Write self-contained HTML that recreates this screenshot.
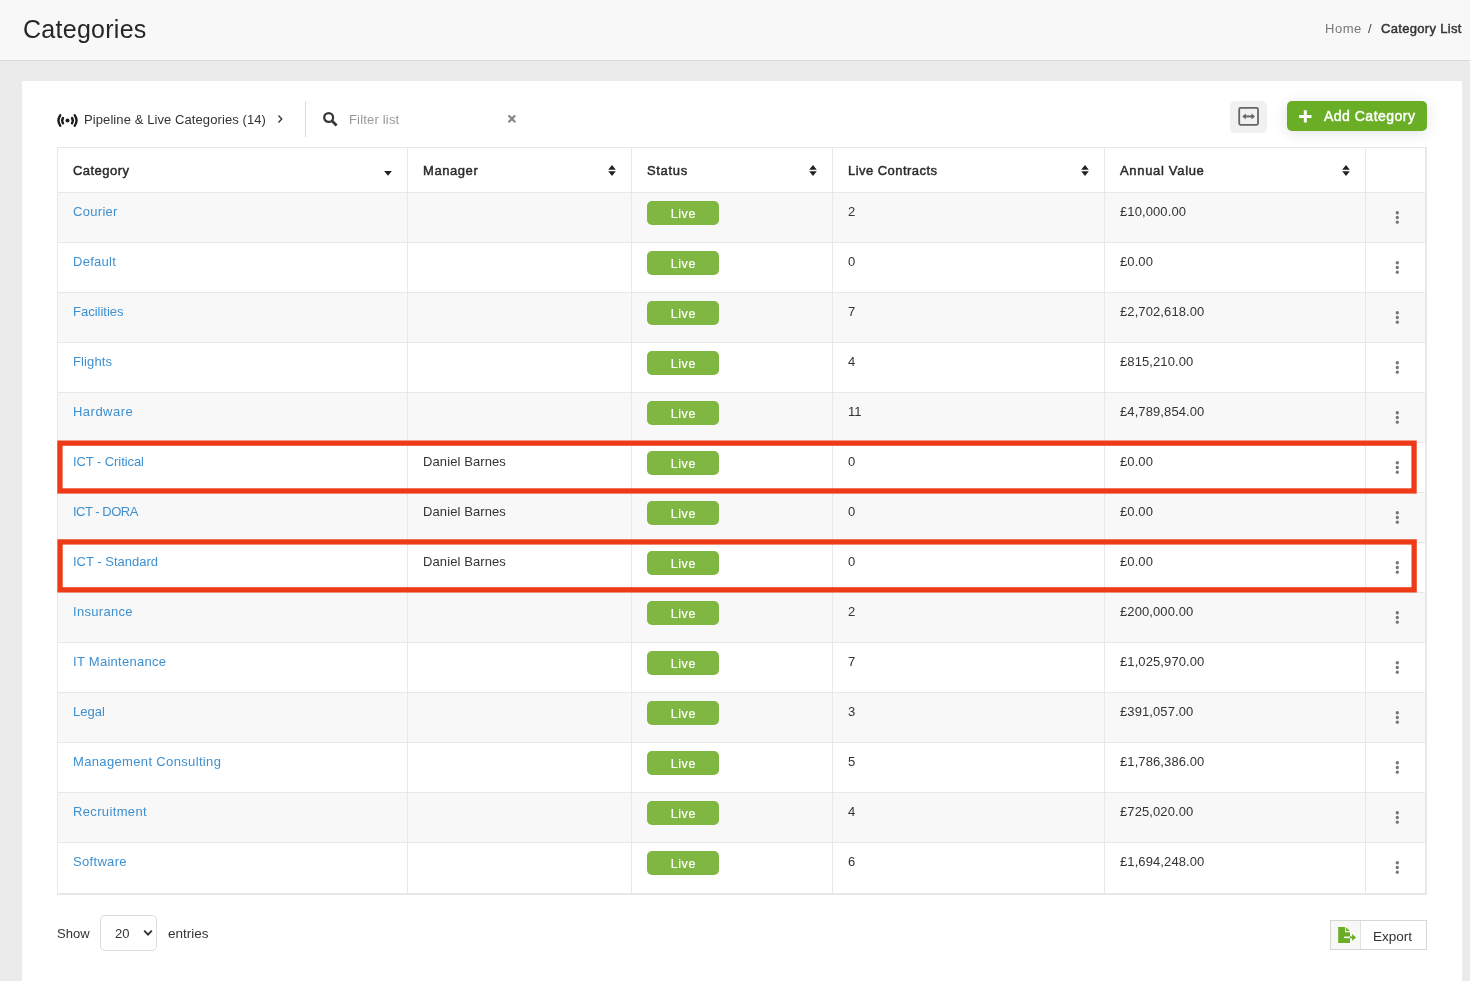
<!DOCTYPE html>
<html><head><meta charset="utf-8"><title>Categories</title>
<style>
html,body{margin:0;padding:0;}
body{width:1470px;height:981px;overflow:hidden;background:#ebebeb;position:relative;
 font-family:"Liberation Sans",sans-serif;color:#333;}
.abs{position:absolute;display:block;}
.t,.badge{will-change:transform;}
.t{position:absolute;white-space:nowrap;line-height:16px;font-size:13px;}
#hdr{position:absolute;left:0;top:0;width:1470px;height:60px;background:#f8f8f8;border-bottom:1px solid #d9d9d9;}
#card{position:absolute;left:22px;top:81px;width:1440px;height:900px;background:#fff;}
.vl{position:absolute;width:1px;background:#e8e8e8;}
.hl{position:absolute;height:1px;background:#e8e8e8;}
.row{position:absolute;left:57px;width:1369px;height:50px;}
.odd{background:#f8f8f8;}
.lnk{color:#3e90d0;}
.badge{position:absolute;width:72px;height:24px;border-radius:5px;background:#80b742;color:#fff;
 font-size:12.5px;line-height:26px;text-align:center;letter-spacing:0.6px;text-indent:0.6px;-webkit-text-stroke:0.2px #fff;}
.dot{position:absolute;width:3.4px;height:3.4px;border-radius:50%;background:#777;}
.sb{font-weight:normal;-webkit-text-stroke:0.45px currentColor;}
.th{color:#2a2a2a;}
.red{position:absolute;border:5px solid #ea3b16;box-sizing:border-box;}
</style></head><body>

<div id="hdr"></div>
<div class="t" style="left:22.5px;top:13.5px;font-size:25px;line-height:30px;color:#262626;letter-spacing:0.27px;">Categories</div>
<div class="t" style="left:1325px;top:21px;color:#777;letter-spacing:0.55px;">Home</div>
<div class="t" style="left:1367.5px;top:21px;color:#444;">/</div>
<div class="t sb" style="left:1380.8px;top:21px;color:#333;letter-spacing:0.32px;">Category List</div>
<div id="card"></div>
<svg class="abs" style="left:57px;top:113px" width="21" height="15" viewBox="0 0 21 15">
<g fill="none" stroke="#1e1e1e" stroke-width="2.4" stroke-linecap="round">
<path d="M3.2 2.3 Q-0.3 7.5 3.2 12.7"/><path d="M6 5 Q4.4 7.6 6 10.3"/>
<path d="M17.8 2.3 Q21.3 7.5 17.8 12.7"/><path d="M15 5 Q16.6 7.6 15 10.3"/>
</g><circle cx="10.5" cy="7.5" r="2" fill="#1e1e1e"/></svg>
<div class="t" style="left:83.5px;top:112px;color:#333;letter-spacing:0.09px;">Pipeline &amp; Live Categories (14)</div>
<svg class="abs" style="left:276px;top:114px" width="8" height="10" viewBox="0 0 8 10">
<path d="M2.5 1.5 L5.8 5 L2.5 8.5" fill="none" stroke="#333" stroke-width="1.3"/></svg>
<div class="vl" style="left:305px;top:101px;height:36px;background:#dcdcdc;"></div>
<svg class="abs" style="left:318px;top:108px" width="24" height="22" viewBox="0 0 24 22">
<circle cx="10.65" cy="9.5" r="4.45" fill="none" stroke="#363636" stroke-width="2.2"/>
<path d="M13.9 12.8 L18.6 17.5" stroke="#363636" stroke-width="2.7"/></svg>
<div class="t" style="left:349px;top:112px;color:#999;letter-spacing:0.18px;">Filter list</div>
<svg class="abs" style="left:502px;top:109px" width="20" height="20" viewBox="0 0 20 20">
<path d="M7.2 7.1 L12.6 12.6 M12.6 7.1 L7.2 12.6" stroke="#858585" stroke-width="2.2" stroke-linecap="round"/></svg>
<div class="abs" style="left:1230px;top:101px;width:37px;height:32px;border-radius:5px;background:#f1f1f1;"></div>
<svg class="abs" style="left:1232px;top:102px" width="32" height="30" viewBox="0 0 32 30">
<rect x="7.2" y="5.9" width="18.8" height="16.9" rx="1.5" fill="none" stroke="#666" stroke-width="1.8"/>
<path d="M11.6 14.4 H21.6" stroke="#666" stroke-width="2"/>
<path d="M10.6 14.4 L13.6 11.9 L13.6 16.9 Z M22.7 14.4 L19.7 11.9 L19.7 16.9 Z" fill="#666" stroke="#666" stroke-width="0.5" stroke-linejoin="round"/></svg>
<div class="abs" style="left:1287px;top:101px;width:140px;height:30px;border-radius:5px;background:#6aae25;box-shadow:0 2px 14px rgba(0,0,0,0.12);"></div>
<svg class="abs" style="left:1298px;top:109px" width="15" height="15" viewBox="0 0 15 15">
<path d="M7.3 1.2 V13.6 M1.1 7.4 H13.5" stroke="#fff" stroke-width="3"/></svg>
<div class="t sb" style="left:1323.5px;top:108px;color:#fff;font-size:14px;letter-spacing:0.49px;">Add Category</div>
<div class="row odd" style="top:192px;"></div>
<div class="row" style="top:242px;"></div>
<div class="row odd" style="top:292px;"></div>
<div class="row" style="top:342px;"></div>
<div class="row odd" style="top:392px;"></div>
<div class="row" style="top:442px;"></div>
<div class="row odd" style="top:492px;"></div>
<div class="row" style="top:542px;"></div>
<div class="row odd" style="top:592px;"></div>
<div class="row" style="top:642px;"></div>
<div class="row odd" style="top:692px;"></div>
<div class="row" style="top:742px;"></div>
<div class="row odd" style="top:792px;"></div>
<div class="row" style="top:842px;"></div>
<div class="hl" style="left:57px;top:147px;width:1370px;"></div>
<div class="hl" style="left:57px;top:192px;width:1370px;"></div>
<div class="hl" style="left:57px;top:242px;width:1370px;"></div>
<div class="hl" style="left:57px;top:292px;width:1370px;"></div>
<div class="hl" style="left:57px;top:342px;width:1370px;"></div>
<div class="hl" style="left:57px;top:392px;width:1370px;"></div>
<div class="hl" style="left:57px;top:442px;width:1370px;"></div>
<div class="hl" style="left:57px;top:492px;width:1370px;"></div>
<div class="hl" style="left:57px;top:542px;width:1370px;"></div>
<div class="hl" style="left:57px;top:592px;width:1370px;"></div>
<div class="hl" style="left:57px;top:642px;width:1370px;"></div>
<div class="hl" style="left:57px;top:692px;width:1370px;"></div>
<div class="hl" style="left:57px;top:742px;width:1370px;"></div>
<div class="hl" style="left:57px;top:792px;width:1370px;"></div>
<div class="hl" style="left:57px;top:842px;width:1370px;"></div>
<div class="hl" style="left:57px;top:893px;width:1370px;height:2px;"></div>
<div class="vl" style="left:57px;top:147px;height:746px;"></div>
<div class="vl" style="left:407px;top:147px;height:746px;"></div>
<div class="vl" style="left:631px;top:147px;height:746px;"></div>
<div class="vl" style="left:832px;top:147px;height:746px;"></div>
<div class="vl" style="left:1104px;top:147px;height:746px;"></div>
<div class="vl" style="left:1365px;top:147px;height:746px;"></div>
<div class="vl" style="left:1425px;top:147px;height:748px;width:2px;"></div>
<div class="t th sb" style="left:73px;top:163px;letter-spacing:0.46px;">Category</div>
<svg class="abs" style="left:384px;top:170px" width="8" height="6" viewBox="0 0 8 6"><path d="M0.1 1 L7.9 1 L4 5.8 Z" fill="#222"/></svg>
<div class="t th sb" style="left:423px;top:163px;letter-spacing:0.57px;">Manager</div>
<svg class="abs" style="left:608.4px;top:164px" width="8" height="13" viewBox="0 0 8 13"><path d="M0.2 5.8 L4 1 L7.8 5.8 Z M0.2 7.2 L7.8 7.2 L4 12 Z" fill="#222"/></svg>
<div class="t th sb" style="left:647px;top:163px;letter-spacing:0.66px;">Status</div>
<svg class="abs" style="left:809.4px;top:164px" width="8" height="13" viewBox="0 0 8 13"><path d="M0.2 5.8 L4 1 L7.8 5.8 Z M0.2 7.2 L7.8 7.2 L4 12 Z" fill="#222"/></svg>
<div class="t th sb" style="left:848px;top:163px;letter-spacing:0.45px;">Live Contracts</div>
<svg class="abs" style="left:1081.4px;top:164px" width="8" height="13" viewBox="0 0 8 13"><path d="M0.2 5.8 L4 1 L7.8 5.8 Z M0.2 7.2 L7.8 7.2 L4 12 Z" fill="#222"/></svg>
<div class="t th sb" style="left:1120px;top:163px;letter-spacing:0.68px;">Annual Value</div>
<svg class="abs" style="left:1342.4px;top:164px" width="8" height="13" viewBox="0 0 8 13"><path d="M0.2 5.8 L4 1 L7.8 5.8 Z M0.2 7.2 L7.8 7.2 L4 12 Z" fill="#222"/></svg>
<div class="t lnk" style="left:73px;top:204px;letter-spacing:0.300px;">Courier</div>
<div class="badge" style="left:647px;top:201px;">Live</div>
<div class="t" style="left:848px;top:204px;">2</div>
<div class="t" style="left:1120px;top:204px;letter-spacing:0.1px;">£10,000.00</div>
<svg class="abs" style="left:1390px;top:207px" width="15" height="20" viewBox="0 0 15 20"><circle cx="7.3" cy="5.7" r="1.7" fill="#777"/><circle cx="7.3" cy="10.5" r="1.65" fill="#777"/><circle cx="7.3" cy="15.2" r="1.65" fill="#777"/></svg>
<div class="t lnk" style="left:73px;top:254px;letter-spacing:0.283px;">Default</div>
<div class="badge" style="left:647px;top:251px;">Live</div>
<div class="t" style="left:848px;top:254px;">0</div>
<div class="t" style="left:1120px;top:254px;letter-spacing:0.1px;">£0.00</div>
<svg class="abs" style="left:1390px;top:257px" width="15" height="20" viewBox="0 0 15 20"><circle cx="7.3" cy="5.7" r="1.7" fill="#777"/><circle cx="7.3" cy="10.5" r="1.65" fill="#777"/><circle cx="7.3" cy="15.2" r="1.65" fill="#777"/></svg>
<div class="t lnk" style="left:73px;top:304px;letter-spacing:0.000px;">Facilities</div>
<div class="badge" style="left:647px;top:301px;">Live</div>
<div class="t" style="left:848px;top:304px;">7</div>
<div class="t" style="left:1120px;top:304px;letter-spacing:0.1px;">£2,702,618.00</div>
<svg class="abs" style="left:1390px;top:307px" width="15" height="20" viewBox="0 0 15 20"><circle cx="7.3" cy="5.7" r="1.7" fill="#777"/><circle cx="7.3" cy="10.5" r="1.65" fill="#777"/><circle cx="7.3" cy="15.2" r="1.65" fill="#777"/></svg>
<div class="t lnk" style="left:73px;top:354px;letter-spacing:0.133px;">Flights</div>
<div class="badge" style="left:647px;top:351px;">Live</div>
<div class="t" style="left:848px;top:354px;">4</div>
<div class="t" style="left:1120px;top:354px;letter-spacing:0.1px;">£815,210.00</div>
<svg class="abs" style="left:1390px;top:357px" width="15" height="20" viewBox="0 0 15 20"><circle cx="7.3" cy="5.7" r="1.7" fill="#777"/><circle cx="7.3" cy="10.5" r="1.65" fill="#777"/><circle cx="7.3" cy="15.2" r="1.65" fill="#777"/></svg>
<div class="t lnk" style="left:73px;top:404px;letter-spacing:0.486px;">Hardware</div>
<div class="badge" style="left:647px;top:401px;">Live</div>
<div class="t" style="left:848px;top:404px;">11</div>
<div class="t" style="left:1120px;top:404px;letter-spacing:0.1px;">£4,789,854.00</div>
<svg class="abs" style="left:1390px;top:407px" width="15" height="20" viewBox="0 0 15 20"><circle cx="7.3" cy="5.7" r="1.7" fill="#777"/><circle cx="7.3" cy="10.5" r="1.65" fill="#777"/><circle cx="7.3" cy="15.2" r="1.65" fill="#777"/></svg>
<div class="t lnk" style="left:73px;top:454px;letter-spacing:-0.077px;">ICT - Critical</div>
<div class="t" style="left:423px;top:454px;letter-spacing:0.1px;">Daniel Barnes</div>
<div class="badge" style="left:647px;top:451px;">Live</div>
<div class="t" style="left:848px;top:454px;">0</div>
<div class="t" style="left:1120px;top:454px;letter-spacing:0.1px;">£0.00</div>
<svg class="abs" style="left:1390px;top:457px" width="15" height="20" viewBox="0 0 15 20"><circle cx="7.3" cy="5.7" r="1.7" fill="#777"/><circle cx="7.3" cy="10.5" r="1.65" fill="#777"/><circle cx="7.3" cy="15.2" r="1.65" fill="#777"/></svg>
<div class="t lnk" style="left:73px;top:504px;letter-spacing:-0.489px;">ICT - DORA</div>
<div class="t" style="left:423px;top:504px;letter-spacing:0.1px;">Daniel Barnes</div>
<div class="badge" style="left:647px;top:501px;">Live</div>
<div class="t" style="left:848px;top:504px;">0</div>
<div class="t" style="left:1120px;top:504px;letter-spacing:0.1px;">£0.00</div>
<svg class="abs" style="left:1390px;top:507px" width="15" height="20" viewBox="0 0 15 20"><circle cx="7.3" cy="5.7" r="1.7" fill="#777"/><circle cx="7.3" cy="10.5" r="1.65" fill="#777"/><circle cx="7.3" cy="15.2" r="1.65" fill="#777"/></svg>
<div class="t lnk" style="left:73px;top:554px;letter-spacing:0.000px;">ICT - Standard</div>
<div class="t" style="left:423px;top:554px;letter-spacing:0.1px;">Daniel Barnes</div>
<div class="badge" style="left:647px;top:551px;">Live</div>
<div class="t" style="left:848px;top:554px;">0</div>
<div class="t" style="left:1120px;top:554px;letter-spacing:0.1px;">£0.00</div>
<svg class="abs" style="left:1390px;top:557px" width="15" height="20" viewBox="0 0 15 20"><circle cx="7.3" cy="5.7" r="1.7" fill="#777"/><circle cx="7.3" cy="10.5" r="1.65" fill="#777"/><circle cx="7.3" cy="15.2" r="1.65" fill="#777"/></svg>
<div class="t lnk" style="left:73px;top:604px;letter-spacing:0.300px;">Insurance</div>
<div class="badge" style="left:647px;top:601px;">Live</div>
<div class="t" style="left:848px;top:604px;">2</div>
<div class="t" style="left:1120px;top:604px;letter-spacing:0.1px;">£200,000.00</div>
<svg class="abs" style="left:1390px;top:607px" width="15" height="20" viewBox="0 0 15 20"><circle cx="7.3" cy="5.7" r="1.7" fill="#777"/><circle cx="7.3" cy="10.5" r="1.65" fill="#777"/><circle cx="7.3" cy="15.2" r="1.65" fill="#777"/></svg>
<div class="t lnk" style="left:73px;top:654px;letter-spacing:0.285px;">IT Maintenance</div>
<div class="badge" style="left:647px;top:651px;">Live</div>
<div class="t" style="left:848px;top:654px;">7</div>
<div class="t" style="left:1120px;top:654px;letter-spacing:0.1px;">£1,025,970.00</div>
<svg class="abs" style="left:1390px;top:657px" width="15" height="20" viewBox="0 0 15 20"><circle cx="7.3" cy="5.7" r="1.7" fill="#777"/><circle cx="7.3" cy="10.5" r="1.65" fill="#777"/><circle cx="7.3" cy="15.2" r="1.65" fill="#777"/></svg>
<div class="t lnk" style="left:73px;top:704px;letter-spacing:0.000px;">Legal</div>
<div class="badge" style="left:647px;top:701px;">Live</div>
<div class="t" style="left:848px;top:704px;">3</div>
<div class="t" style="left:1120px;top:704px;letter-spacing:0.1px;">£391,057.00</div>
<svg class="abs" style="left:1390px;top:707px" width="15" height="20" viewBox="0 0 15 20"><circle cx="7.3" cy="5.7" r="1.7" fill="#777"/><circle cx="7.3" cy="10.5" r="1.65" fill="#777"/><circle cx="7.3" cy="15.2" r="1.65" fill="#777"/></svg>
<div class="t lnk" style="left:73px;top:754px;letter-spacing:0.350px;">Management Consulting</div>
<div class="badge" style="left:647px;top:751px;">Live</div>
<div class="t" style="left:848px;top:754px;">5</div>
<div class="t" style="left:1120px;top:754px;letter-spacing:0.1px;">£1,786,386.00</div>
<svg class="abs" style="left:1390px;top:757px" width="15" height="20" viewBox="0 0 15 20"><circle cx="7.3" cy="5.7" r="1.7" fill="#777"/><circle cx="7.3" cy="10.5" r="1.65" fill="#777"/><circle cx="7.3" cy="15.2" r="1.65" fill="#777"/></svg>
<div class="t lnk" style="left:73px;top:804px;letter-spacing:0.350px;">Recruitment</div>
<div class="badge" style="left:647px;top:801px;">Live</div>
<div class="t" style="left:848px;top:804px;">4</div>
<div class="t" style="left:1120px;top:804px;letter-spacing:0.1px;">£725,020.00</div>
<svg class="abs" style="left:1390px;top:807px" width="15" height="20" viewBox="0 0 15 20"><circle cx="7.3" cy="5.7" r="1.7" fill="#777"/><circle cx="7.3" cy="10.5" r="1.65" fill="#777"/><circle cx="7.3" cy="15.2" r="1.65" fill="#777"/></svg>
<div class="t lnk" style="left:73px;top:854px;letter-spacing:0.314px;">Software</div>
<div class="badge" style="left:647px;top:851px;">Live</div>
<div class="t" style="left:848px;top:854px;">6</div>
<div class="t" style="left:1120px;top:854px;letter-spacing:0.1px;">£1,694,248.00</div>
<svg class="abs" style="left:1390px;top:857px" width="15" height="20" viewBox="0 0 15 20"><circle cx="7.3" cy="5.7" r="1.7" fill="#777"/><circle cx="7.3" cy="10.5" r="1.65" fill="#777"/><circle cx="7.3" cy="15.2" r="1.65" fill="#777"/></svg>
<svg class="abs" style="left:0;top:0" width="1470" height="981" viewBox="0 0 1470 981"><rect x="59.95" y="443.15" width="1354.10" height="47.80" fill="none" stroke="#ec3b16" stroke-width="5.3"/></svg>
<svg class="abs" style="left:0;top:0" width="1470" height="981" viewBox="0 0 1470 981"><rect x="60.05" y="541.95" width="1354.10" height="47.90" fill="none" stroke="#ec3b16" stroke-width="5.3"/></svg>
<div class="t" style="left:57px;top:926px;">Show</div>
<div class="abs" style="left:100px;top:915px;width:57px;height:36px;box-sizing:border-box;border:1px solid #dcdcdc;border-radius:5px;background:#fff;"></div>
<div class="t" style="left:115px;top:926px;">20</div>
<svg class="abs" style="left:142.3px;top:928.4px" width="12" height="10" viewBox="0 0 12 10">
<path d="M2.2 2.6 L6 6.6 L9.8 2.6" fill="none" stroke="#333" stroke-width="1.9"/></svg>
<div class="t" style="left:168px;top:926px;font-size:13.5px;">entries</div>
<div class="abs" style="left:1330px;top:920px;width:97px;height:30px;box-sizing:border-box;border:1px solid #d6d6d6;background:#fff;"></div>
<div class="abs" style="left:1331px;top:921px;width:29px;height:28px;background:#f7f7f7;border-right:1px solid #e2e2e2;"></div>
<svg class="abs" style="left:1334px;top:924px" width="26" height="24" viewBox="0 0 26 24">
<path d="M4.2 3.1 H11.1 V8.3 H16 V19.1 H4.2 Z" fill="#6aad24"/>
<path d="M12 3.2 L15.9 7.1 H12 Z" fill="#6aad24"/>
<rect x="10.1" y="12.5" width="6" height="1.7" fill="#f7f7f7"/>
<rect x="16" y="12.4" width="3" height="1.9" fill="#6aad24"/>
<path d="M18.1 9.9 L22.1 13.4 L18.1 16.9 Z" fill="#6aad24"/></svg>
<div class="t" style="left:1373px;top:929px;font-size:13.5px;">Export</div>
</body></html>
